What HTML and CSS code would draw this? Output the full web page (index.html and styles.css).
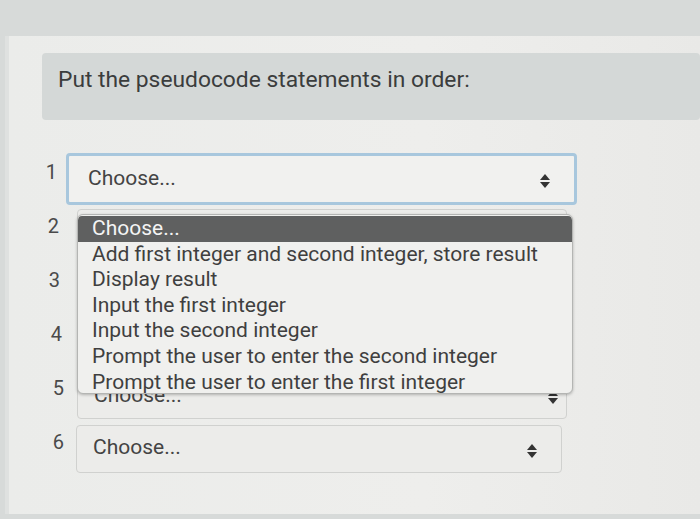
FILE: index.html
```html
<!DOCTYPE html>
<html lang="en">
<head>
  <meta charset="UTF-8" />
  <title>Order the statements</title>
  <link rel="stylesheet" href="styles.css">
</head>
<body>
<div class="page">
  <div class="prompt">Put the pseudocode statements in order:</div>

  <div class="answers">
    <div class="row r1">
      <span class="num">1</span>
      <div class="select focus">Choose...<span class="arrows"></span></div>
    </div>
    <div class="row r2">
      <span class="num">2</span>
      <div class="select">Choose...<span class="arrows"></span></div>
    </div>
    <div class="row r3">
      <span class="num">3</span>
      <div class="select">Choose...<span class="arrows"></span></div>
    </div>
    <div class="row r4">
      <span class="num">4</span>
      <div class="select">Choose...<span class="arrows"></span></div>
    </div>
    <div class="row r5">
      <span class="num">5</span>
      <div class="select">Choose...<span class="arrows"></span></div>
    </div>
    <div class="row r6">
      <span class="num">6</span>
      <div class="select">Choose...<span class="arrows"></span></div>
    </div>

    <ul class="menu">
      <li class="active">Choose...</li>
      <li>Add first integer and second integer, store result</li>
      <li>Display result</li>
      <li>Input the first integer</li>
      <li>Input the second integer</li>
      <li>Prompt the user to enter the second integer</li>
      <li>Prompt the user to enter the first integer</li>
    </ul>
  </div>
</div>
</body>
</html>
```

FILE: styles.css
```css
* { box-sizing: border-box; }
html, body { margin:0; padding:0; }
body {
  background:#d7dad9; font-family:Roboto, "Noto Sans", sans-serif;
  height:519px; overflow:hidden; padding-top:36px; padding-left:5px;
}
.page {
  background:linear-gradient(90deg, #ebecea 0%, #eeeeec 60%, #e9e9e7 100%);
  height:478px; padding-top:17px; border-left:4px solid #dfe1e0;
}
.prompt {
  margin-left:33px; height:67px; background:#d4d8d7; border-radius:4px;
  padding:13px 0 0 16px; font-size:22.8px; color:#3b3d3d;
}
.answers { position:relative; margin-top:35px; }
.row { display:flex; align-items:flex-start; height:48px; margin-bottom:6px; }
.num { width:24px; margin-left:24px; padding-top:5px; font-size:20px; color:#4a4a4a; text-align:right; }
.r2 .num { margin-left:26px; }
.r3 .num { margin-left:27px; }
.r4 .num { margin-left:29px; }
.r5 .num { margin-left:31px; }
.select {
  position:relative; margin-left:10px; width:490px; height:48px;
  border:1px solid #d0d1cf; border-radius:4px; background:#ececea;
  padding:11px 0 0 16px; font-size:21px; color:#444;
}
.select.focus {
  margin-left:9px; width:511px; height:52px; margin-top:-2px;
  border:3px solid #a8c7dd; background:#f1f1ef; padding-top:10px; padding-left:19px;
}
.r2 .select { margin-left:18px; }
.r3 .select { margin-left:17px; }
.r4 .select { margin-left:15px; }
.r5 .select { margin-left:13px; }
.arrows { position:absolute; right:24px; top:18px; width:10px; height:14px; }
.arrows::before, .arrows::after {
  content:""; position:absolute; left:0;
  border-left:5px solid transparent; border-right:5px solid transparent;
}
.arrows::before { top:0; border-bottom:6px solid #333; }
.arrows::after { bottom:0; border-top:6px solid #333; }
.r5 .arrows { right:8px; }
.r6 .select { margin-left:12px; width:486px; padding-top:9px; }
.r6 .num { margin-left:31px; }

.menu {
  position:absolute; left:68px; top:59px; width:496px; height:180px;
  margin:0; padding:1px 0 0 0; list-style:none;
  background:#f0f0ee; border:1px solid #b4b5b3; border-radius:6px;
  box-shadow:0 1px 3px rgba(0,0,0,0.25); overflow:hidden;
  font-size:21px; color:#3f3f3f; line-height:25.6px;
}
.menu li { padding-left:14px; }
.menu li.active { background:#5f6060; color:#f4f4f4; border-radius:4px 4px 0 0; }
```
